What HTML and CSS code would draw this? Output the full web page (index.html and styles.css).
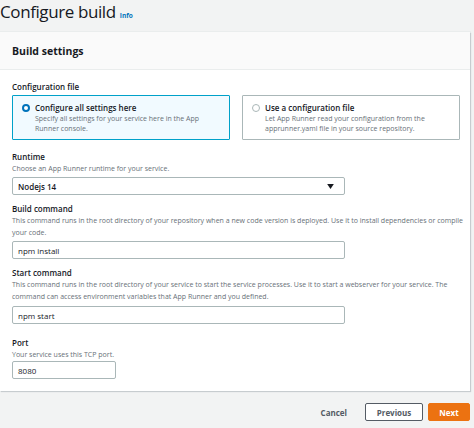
FILE: index.html
```html
<!DOCTYPE html>
<html>
<head>
<meta charset="utf-8">
<link rel="stylesheet" href="styles.css">
</head>
<body>
<div class="page">
  <div class="title-row">
    <h1 class="title">Configure build</h1>
    <a class="info">Info</a>
  </div>
  <div class="card">
    <div class="card-header">Build settings</div>
    <div class="card-body">
      <div class="field field-config">
        <div class="label">Configuration file</div>
        <div class="tiles">
          <div class="tile tile-selected">
            <span class="radio radio-on"></span>
            <div class="tile-text">
              <div class="tile-title">Configure all settings here</div>
              <div class="tile-desc">Specify all settings for your service here in the App Runner console.</div>
            </div>
          </div>
          <div class="tile">
            <span class="radio"></span>
            <div class="tile-text">
              <div class="tile-title">Use a configuration file</div>
              <div class="tile-desc">Let App Runner read your configuration from the apprunner.yaml file in your source repository.</div>
            </div>
          </div>
        </div>
      </div>
      <div class="field field-runtime">
        <div class="label">Runtime</div>
        <div class="desc">Choose an App Runner runtime for your service.</div>
        <div class="select">
          <span>Nodejs 14</span>
          <svg class="caret" width="7" height="5" viewBox="0 0 8 6"><path d="M0 0 H8 L4 6 Z" fill="#16191f"/></svg>
        </div>
      </div>
      <div class="field">
        <div class="label">Build command</div>
        <div class="desc">This command runs in the root directory of your repository when a new code version is deployed. Use it to install dependencies or compile your code.</div>
        <div class="input wide">npm install</div>
      </div>
      <div class="field field-start">
        <div class="label">Start command</div>
        <div class="desc">This command runs in the root directory of your service to start the service processes. Use it to start a webserver for your service. The command can access environment variables that App Runner and you defined.</div>
        <div class="input wide">npm start</div>
      </div>
      <div class="field field-port">
        <div class="label">Port</div>
        <div class="desc">Your service uses this TCP port.</div>
        <div class="input port">8080</div>
      </div>
    </div>
  </div>
  <div class="actions">
    <span class="btn-link">Cancel</span>
    <span class="btn btn-normal">Previous</span>
    <span class="btn btn-primary">Next</span>
  </div>
</div>
</body>
</html>
```
FILE: styles.css
```css
html, body {
  margin: 0;
  padding: 0;
}
body {
  background: #f2f3f3;
  font-family: "Open Sans", "Noto Sans", sans-serif;
  color: #16191f;
  width: 474px;
  height: 428px;
  overflow: hidden;
}
.page {
  width: 470px;
}
.title-row {
  display: flex;
  align-items: baseline;
  gap: 4px;
  height: 32px;
}
.title {
  margin: 0;
  font-size: 17px;
  font-weight: 400;
  line-height: normal;
  letter-spacing: -0.4px;
}
.info {
  font-size: 6.5px;
  font-weight: 700;
  color: #0073bb;
}
.card {
  background: #fff;
  box-shadow: 1px 1px 1px rgba(0,22,43,0.15), 0 0 0 1px #eaeded;
}
.card-header {
  height: 38px;
  box-sizing: border-box;
  padding-left: 12px;
  display: flex;
  align-items: center;
  font-size: 10.5px;
  font-weight: 700;
  background: #fafafa;
  border-bottom: 1px solid #eaeded;
}
.card-body {
  padding: 11px 2px 12px 12px;
}
.field {
  margin-top: 8px;
}
.field-config {
  margin-top: 0;
}
.label {
  font-size: 8px;
  line-height: 12px;
  font-weight: 600;
}
.desc {
  font-size: 7px;
  line-height: 12px;
  color: #687078;
}
.tiles {
  display: grid;
  grid-template-columns: 218px 218px;
  gap: 12px;
  margin-top: 2px;
}
.tile {
  height: 45px;
  box-sizing: border-box;
  border: 1px solid #aab7b8;
  border-radius: 1px;
  display: flex;
  gap: 5px;
  padding: 6px 8px 0 9px;
  background: #fff;
}
.tile-selected {
  background: #f1faff;
  border-color: #00a1c9;
}
.radio {
  flex: none;
  width: 8px;
  height: 8px;
  box-sizing: border-box;
  border-radius: 50%;
  border: 1px solid #aab7b8;
  margin-top: 2px;
  background: #fff;
}
.radio-on {
  border: 2.5px solid #0073bb;
}
.tile-title {
  font-size: 8px;
  line-height: 11px;
  font-weight: 600;
}
.tile-desc {
  font-size: 7px;
  line-height: 10px;
  color: #687078;
  margin-top: 1px;
}
.field-runtime {
  margin-top: 11px;
}
.select, .input {
  height: 18px;
  box-sizing: border-box;
  border: 1px solid #aab7b8;
  border-radius: 2px;
  background: #fff;
  display: flex;
  align-items: center;
  padding: 0 8px 0 5px;
  font-size: 8px;
  margin-top: 2px;
}
.select {
  width: 333px;
  justify-content: space-between;
  font-weight: 600;
}
.caret {
  margin-right: 2px;
}
.wide {
  width: 333px;
}
.field-start .input {
  margin-top: 3px;
}
.port {
  width: 104px;
}
.field-port {
  margin-top: 13px;
}
.field-port .input {
  margin-top: 0;
}
.actions {
  display: flex;
  justify-content: flex-end;
  align-items: center;
  height: 42px;
  gap: 5px;
}
.btn-link {
  font-size: 8px;
  font-weight: 700;
  color: #545b64;
  margin-right: 13px;
}
.btn {
  height: 18px;
  box-sizing: border-box;
  border-radius: 2px;
  display: flex;
  align-items: center;
  justify-content: center;
  font-size: 8px;
  font-weight: 700;
}
.btn-normal {
  width: 58px;
  border: 1px solid #545b64;
  background: #fff;
  color: #545b64;
}
.btn-primary {
  width: 42px;
  background: #ec7211;
  border: 1px solid #ec7211;
  color: #fff;
}
```
